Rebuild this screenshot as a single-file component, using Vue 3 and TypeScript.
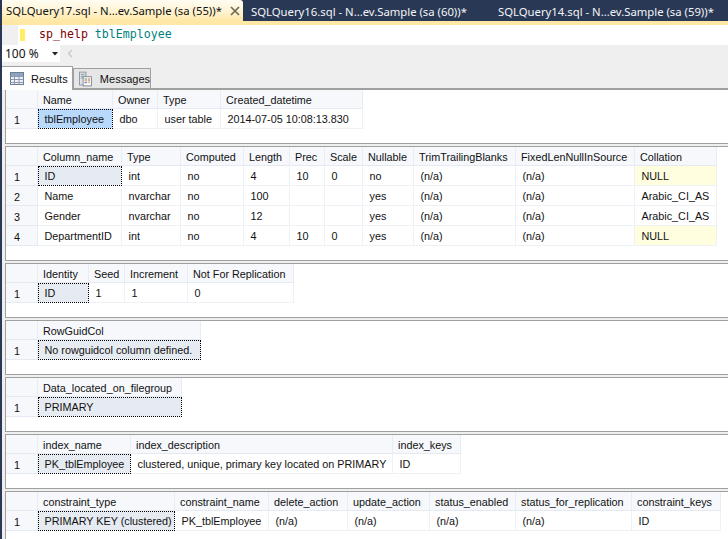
<script setup lang="ts">
interface Grid {
  cols: number[]
  heads: string[]
  rows: string[][]
  sel?: string
}
const grids: Grid[] = [
  { cols: [75, 45, 63, 142], heads: ['Name', 'Owner', 'Type', 'Created_datetime'], rows: [['tblEmployee', 'dbo', 'user table', '2014-07-05 10:08:13.830']], sel: 'blue' },
  { cols: [84, 59, 63, 46, 35, 38, 51, 102, 119, 82], heads: ['Column_name', 'Type', 'Computed', 'Length', 'Prec', 'Scale', 'Nullable', 'TrimTrailingBlanks', 'FixedLenNullInSource', 'Collation'], rows: [
    ['ID', 'int', 'no', '4', '10', '0', 'no', '(n/a)', '(n/a)', 'NULL'],
    ['Name', 'nvarchar', 'no', '100', '', '', 'yes', '(n/a)', '(n/a)', 'Arabic_CI_AS'],
    ['Gender', 'nvarchar', 'no', '12', '', '', 'yes', '(n/a)', '(n/a)', 'Arabic_CI_AS'],
    ['DepartmentID', 'int', 'no', '4', '10', '0', 'yes', '(n/a)', '(n/a)', 'NULL'],
  ] },
  { cols: [51, 36, 63, 106], heads: ['Identity', 'Seed', 'Increment', 'Not For Replication'], rows: [['ID', '1', '1', '0']] },
  { cols: [163], heads: ['RowGuidCol'], rows: [['No rowguidcol column defined.']] },
  { cols: [144], heads: ['Data_located_on_filegroup'], rows: [['PRIMARY']] },
  { cols: [93, 262, 68], heads: ['index_name', 'index_description', 'index_keys'], rows: [['PK_tblEmployee', 'clustered, unique, primary key located on PRIMARY', 'ID']] },
  { cols: [137, 94, 79, 82, 86, 116, 89], heads: ['constraint_type', 'constraint_name', 'delete_action', 'update_action', 'status_enabled', 'status_for_replication', 'constraint_keys'], rows: [['PRIMARY KEY (clustered)', 'PK_tblEmployee', '(n/a)', '(n/a)', '(n/a)', '(n/a)', 'ID']] },
]
function cellClass(g: Grid, r: number, c: number, v: string): string[] {
  const out: string[] = []
  if (r === 0 && c === 0) out.push(g.sel === 'blue' ? 'sel-blue' : 'sel')
  if (v === 'NULL') out.push('null')
  return out
}
</script>

<template>
  <div class="app">
    <div class="doc-tabs">
      <div class="doc-tab active">
        <span>SQLQuery17.sql - N...ev.Sample (sa (55))*</span>
        <svg class="close" width="10" height="10" viewBox="0 0 10 10"><path d="M1 1L9 9M9 1L1 9" stroke="#6b6a58" stroke-width="1.7" fill="none" /></svg>
      </div>
      <div class="doc-tab t2">SQLQuery16.sql - N...ev.Sample (sa (60))*</div>
      <div class="doc-tab t3">SQLQuery14.sql - N...ev.Sample (sa (59))*</div>
    </div>
    <div class="accent"></div>
    <div class="editor">
      <div class="gutter"></div>
      <div class="mark"></div>
      <code class="code"><span class="kw">sp_help</span> <span class="id">tblEmployee</span></code>
    </div>
    <div class="zoombar">
      <div class="combo">
        <span>100 %</span>
        <svg width="6" height="4" viewBox="0 0 6 4"><path d="M0 0H6L3 3.5Z" fill="#222" /></svg>
      </div>
      <svg class="chev" width="6" height="9" viewBox="0 0 6 9"><path d="M5 1L1.5 4.5L5 8" stroke="#c8c8c8" stroke-width="1.4" fill="none" /></svg>
    </div>
    <div class="res-tabs">
      <div class="res-tab on">
        <svg width="14" height="13" viewBox="0 0 14 13">
          <rect x="0.5" y="0.5" width="13" height="12" fill="#eef2f8" stroke="#6d7d94" />
          <rect x="1" y="1" width="12" height="3" fill="#8fa6c6" />
          <path d="M0.5 4.5H13.5M0.5 7.5H13.5M0.5 10.5H13.5M4.5 1V12M9 1V12" stroke="#8c9ab0" stroke-width="1" fill="none" />
        </svg>
        <span>Results</span>
      </div>
      <div class="res-tab off">
        <svg width="14" height="16" viewBox="0 0 14 16">
          <rect x="0.5" y="0.5" width="7" height="14" fill="#dfe3e8" stroke="#8b94a0" />
          <path d="M2 3H6M2 5H6M2 7H6" stroke="#8b94a0" />
          <rect x="4.5" y="5.5" width="9" height="10" fill="#fff" stroke="#7a8592" />
          <path d="M6 8H9" stroke="#3f8f3f" /><path d="M6 10H9" stroke="#d9772b" /><path d="M6 12H9" stroke="#3b6fc4" />
          <path d="M10 8H12" stroke="#c33" /><path d="M10 10H12" stroke="#777" /><path d="M10 12H12" stroke="#c9a227" />
        </svg>
        <span>Messages</span>
      </div>
    </div>
    <div class="results">
      <section v-for="(g, gi) in grids" :key="gi" class="grid">
        <div class="row head">
          <div class="rh"></div>
          <div v-for="(h, i) in g.heads" :key="i" class="hc" :style="{ width: g.cols[i] + 'px' }">{{ h }}</div>
        </div>
        <div v-for="(r, ri) in g.rows" :key="ri" class="row">
          <div class="rh num">{{ ri + 1 }}</div>
          <div
            v-for="(v, ci) in r"
            :key="ci"
            class="td"
            :class="cellClass(g, ri, ci, v)"
            :style="{ width: g.cols[ci] + 'px' }"
          >{{ v }}</div>
        </div>
      </section>
    </div>
  </div>
</template>

<style>
html, body { margin: 0; background: #fff; overflow: hidden; }
</style>

<style scoped>
.app {
  width: 728px;
  height: 539px;
  overflow: hidden;
  background: #efefef;
  font-family: "Noto Sans", sans-serif;
  display: flex;
  flex-direction: column;
  border-left: 2px solid #293955;
  box-sizing: border-box;
}
.doc-tabs {
  height: 21px;
  margin-left: -2px;
  background-color: #293955;
  background-image: radial-gradient(#35496a 0.6px, transparent 0.7px);
  background-size: 4px 4px;
  display: flex;
  flex: none;
  font-size: 11.3px;
  color: #fff;
  align-items: stretch;
}
.doc-tab {
  white-space: nowrap;
  line-height: 23px;
}
.active {
  width: 243px;
  box-sizing: border-box;
  padding: 0 3px 0 6px;
  color: #111;
  background: linear-gradient(#fffdf2, #fff5d8 45%, #ffe8a6);
  border-top-right-radius: 3px;
  display: flex;
  justify-content: space-between;
  align-items: center;
  line-height: 21px;
}
.t2 { margin-left: 8px; width: 247px; color: #f3f4f7; }
.t3 { color: #f3f4f7; }
.accent {
  height: 4px;
  margin-left: -2px;
  background: #ffe8a6;
  flex: none;
}
.editor {
  height: 20px;
  background: #fff;
  display: flex;
  flex: none;
  align-items: center;
}
.gutter {
  width: 16px;
  align-self: stretch;
  background: #f0f0f0;
}
.mark {
  width: 5px;
  height: 12px;
  background: #ffee62;
  margin: 0 0 0 2px;
}
.code {
  margin-left: 14px;
  font-family: "DejaVu Sans Mono", monospace;
  font-size: 11.6px;
  line-height: 18px;
  padding-bottom: 2px;
}
.kw { color: #800000; }
.id { color: #008080; }
.zoombar {
  height: 17px;
  display: flex;
  align-items: center;
  flex: none;
  gap: 7px;
}
.combo {
  width: 58px;
  height: 17px;
  box-sizing: border-box;
  background: #fff;
  display: flex;
  align-items: center;
  justify-content: space-between;
  padding: 0 2px 0 3px;
  font-size: 12px;
  color: #111;
}
.res-tabs {
  height: 26px;
  display: flex;
  align-items: flex-end;
  flex: none;
  font-family: "Liberation Sans", sans-serif;
  font-size: 11px;
  color: #111;
  margin-left: -1px;
}
.res-tab {
  display: flex;
  align-items: center;
  box-sizing: border-box;
  border: 1px solid #a0a0a0;
  border-bottom: 0;
}
.on {
  width: 72px;
  height: 24px;
  background: #fff;
  padding-left: 8px;
  gap: 7px;
  position: relative;
  z-index: 1;
  margin-bottom: -2px;
}
.off {
  width: 78px;
  height: 20px;
  padding-left: 5px;
  gap: 7px;
  background: #e6e6e6;
}
.off span { margin-left: 1px; }
.results {
  flex: 1;
  margin-left: 3px;
  border-top: 1px solid #a0a0a0;
  display: flex;
  flex-direction: column;
  gap: 2px;
  font-family: "Liberation Sans", sans-serif;
}
.grid {
  background: #fff;
  height: 53px;
  flex: none;
  border: 1px solid #a0a0a0;
  border-right: 0;
}
.grid:nth-child(2) { height: 113px; }
.row {
  display: flex;
  height: 20px;
  font-size: 10.8px;
  line-height: 20px;
  color: #111;
}
.row.head { height: 19px; line-height: 21px; }
.rh {
  width: 32px;
  flex: none;
  box-sizing: border-box;
  background: #f6f8fc;
  border-right: 1px solid #e8edf5;
  border-bottom: 1px solid #e4e9f2;
}
.num { padding-left: 8px; line-height: 22px; }
.hc {
  flex: none;
  box-sizing: border-box;
  padding-left: 5px;
  background: #f6f8fc;
  border-right: 1px solid #e8edf5;
  border-bottom: 1px solid #e4e9f2;
  white-space: nowrap;
  overflow: hidden;
}
.td {
  flex: none;
  box-sizing: border-box;
  padding-left: 6.5px;
  border-right: 1px solid #eef1f6;
  border-bottom: 1px solid #eef1f6;
  white-space: nowrap;
  overflow: hidden;
}
.sel { background: #e6ebf1; outline: 1px dotted #000; outline-offset: -1px; }
.sel-blue { background: #b8d8fc; outline: 1px dotted #000; outline-offset: -1px; }
.null { background: #ffffe0; }
</style>
